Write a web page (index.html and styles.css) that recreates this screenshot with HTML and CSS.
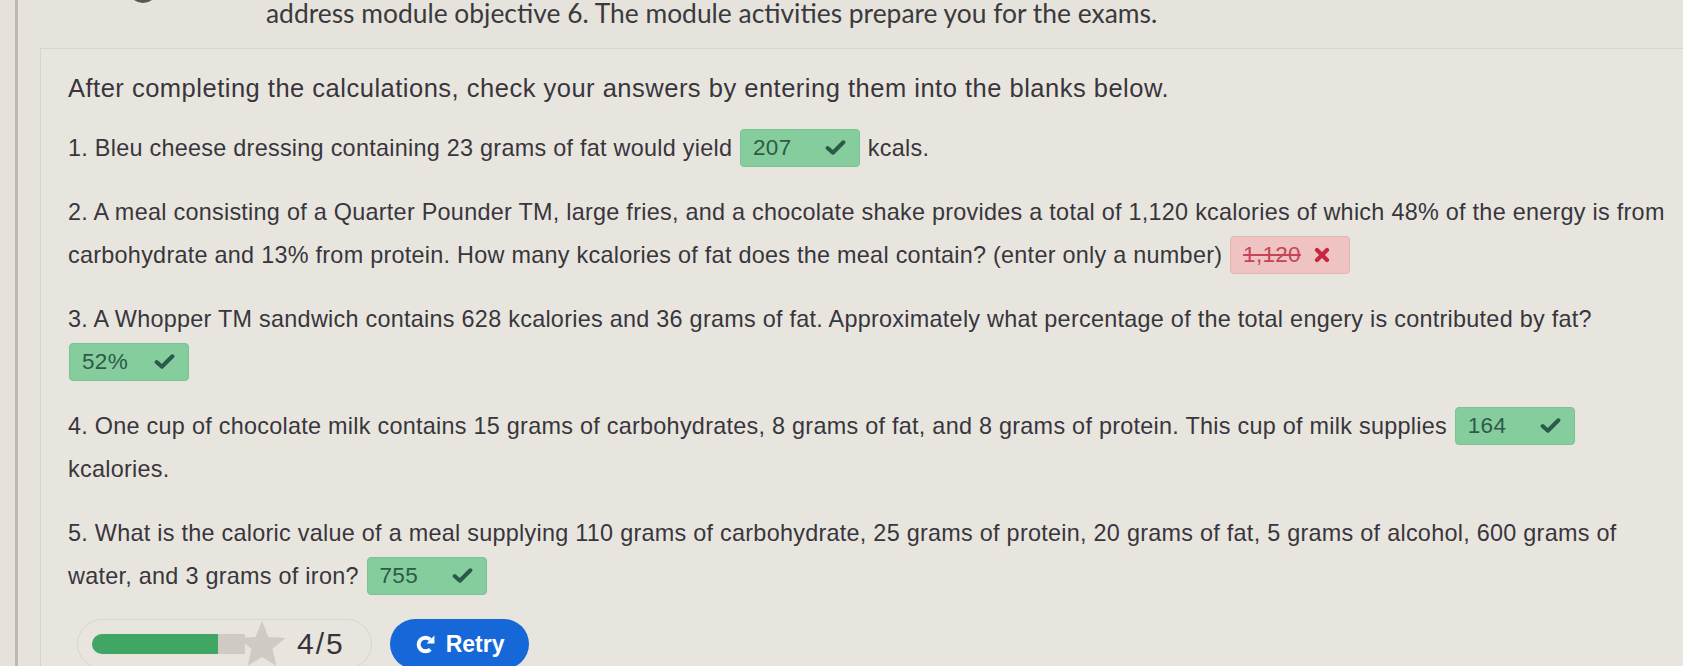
FILE: index.html
```html
<!DOCTYPE html>
<html lang="en">
<head>
<meta charset="utf-8">
<title>Quiz</title>
<link rel="stylesheet" href="styles.css">
</head>
<body>
<div class="frame">
  <div class="header">
    <span class="dot"></span>
    <p class="intro">address module objective 6. The module activities prepare you for the exams.</p>
  </div>
  <div class="card">
    <p class="lead">After completing the calculations, check your answers by entering them into the blanks below.</p>

    <p class="q">1. Bleu cheese dressing containing 23 grams of fat would yield <span class="ans ok"><span class="val">207</span><svg class="chk" viewBox="0 0 20 16"><path d="M2.5 8.5 L7.5 13 L17.5 3"/></svg></span> kcals.</p>

    <p class="q">2. A meal consisting of a Quarter Pounder TM, large fries, and a chocolate shake provides a total of 1,120 kcalories of which 48% of the energy is from carbohydrate and 13% from protein. How many kcalories of fat does the meal contain? (enter only a number) <span class="ans bad"><span class="val">1,120</span><svg class="xic" viewBox="0 0 16 16"><path d="M3 3 L13 13 M13 3 L3 13"/></svg></span></p>

    <p class="q">3. A Whopper TM sandwich contains 628 kcalories and 36 grams of fat. Approximately what percentage of the total engery is contributed by fat? <span class="ans ok"><span class="val">52%</span><svg class="chk" viewBox="0 0 20 16"><path d="M2.5 8.5 L7.5 13 L17.5 3"/></svg></span></p>

    <p class="q">4. One cup of chocolate milk contains 15 grams of carbohydrates, 8 grams of fat, and 8 grams of protein. This cup of milk supplies <span class="ans ok"><span class="val">164</span><svg class="chk" viewBox="0 0 20 16"><path d="M2.5 8.5 L7.5 13 L17.5 3"/></svg></span> kcalories.</p>

    <p class="q">5. What is the caloric value of a meal supplying 110 grams of carbohydrate, 25 grams of protein, 20 grams of fat, 5 grams of alcohol, 600 grams of water, and 3 grams of iron? <span class="ans ok"><span class="val">755</span><svg class="chk" viewBox="0 0 20 16"><path d="M2.5 8.5 L7.5 13 L17.5 3"/></svg></span></p>

    <div class="footer">
      <div class="score">
        <div class="bar"><div class="fill"></div></div>
        <svg class="star" viewBox="0 0 50 48"><polygon points="25,1 31.5,17 48.5,18 35.5,29 39.5,46 25,37 10.5,46 14.5,29 1.5,18 18.5,17"/></svg>
        <span class="frac">4/5</span>
      </div>
      <button class="retry"><svg class="redo" viewBox="0 0 20 20"><path class="arc" d="M14.6 5.4 A6.5 6.5 0 1 0 14.6 14.6"/><polygon points="18.5,1.5 18.5,9 11,9"/></svg><span>Retry</span></button>
    </div>
  </div>
</div>
</body>
</html>
```

FILE: styles.css
```css
html, body {
  margin: 0;
  padding: 0;
  background: #e5e2dc;
  overflow: hidden;
}

.frame {
  margin-left: 15px;
  border-left: 3px solid #bdb9b2;
  height: 666px;
  background: #e6e3dd;
}

.header {
  display: flex;
  align-items: flex-start;
  height: 48px;
}

.dot {
  display: block;
  width: 30px;
  height: 30px;
  border-radius: 50%;
  background: #5a5856;
  margin-top: -27px;
  margin-left: 110px;
  flex: none;
}

.intro {
  margin: -2px 0 0 108px;
  font-family: Lato, "Open Sans", sans-serif;
  font-size: 26.4px;
  line-height: 30px;
  color: #3a3a3c;
  white-space: nowrap;
}

.card {
  margin-left: 22px;
  border-top: 1px solid #d7d4cd;
  border-left: 1px solid #d7d4cd;
  background: #e8e5df;
  padding: 18px 10px 0 27px;
  height: 620px;
  font-family: "Liberation Sans", Arial, Helvetica, sans-serif;
  font-size: 23.4px;
  letter-spacing: 0.27px;
  line-height: 43px;
  color: #38363c;
}

.card p {
  margin: 0 0 21px 0;
}

.card .lead {
  margin-bottom: 17px;
  font-size: 25.5px;
  letter-spacing: 0.5px;
}

.ans {
  display: inline-flex;
  align-items: center;
  justify-content: space-between;
  box-sizing: border-box;
  width: 120px;
  height: 38px;
  padding: 0 13px 0 12px;
  border-radius: 4px;
  vertical-align: middle;
  margin: -4px 1px 0 1px;
  font-size: 22.5px;
  line-height: 38px;
  letter-spacing: 0.3px;
}

.ans.ok {
  background: #85cd9c;
  border: 1px solid #79c291;
  color: #2e5a49;
}

.ans.bad {
  background: #efc3c2;
  border: 1px solid #e7b4b4;
  color: #c44458;
}

.ans.bad .val {
  text-decoration: line-through;
  text-decoration-thickness: 2px;
}

.chk {
  width: 21px;
  height: 17px;
  fill: none;
  stroke: #2c5a4a;
  stroke-width: 3.8;
  stroke-linecap: round;
  stroke-linejoin: round;
}

.xic {
  width: 16px;
  height: 16px;
  margin-right: 6px;
  fill: none;
  stroke: #c8263f;
  stroke-width: 4.2;
  stroke-linecap: round;
}

.footer {
  display: flex;
  align-items: center;
  gap: 18px;
  margin-top: 19px;
}

.score {
  display: flex;
  align-items: center;
  box-sizing: border-box;
  height: 50px;
  margin-left: 9px;
  padding: 0 26px 0 14px;
  border: 1px solid #d8d5ce;
  border-radius: 25px;
}

.bar {
  width: 153px;
  height: 20px;
  background: #cfcbc4;
  border-radius: 10px 0 0 10px;
  overflow: hidden;
}

.fill {
  width: 126px;
  height: 100%;
  background: #3fa763;
}

.star {
  width: 50px;
  height: 48px;
  margin-left: -8px;
  fill: #cfcbc4;
}

.frac {
  margin-left: 10px;
  font-size: 30px;
  letter-spacing: 2px;
  line-height: 1;
  color: #35343a;
}

.retry {
  display: flex;
  align-items: center;
  gap: 10px;
  box-sizing: border-box;
  width: 139px;
  height: 50px;
  padding: 0 0 0 25px;
  border: none;
  border-radius: 25px;
  background: #1667d7;
  color: #ffffff;
  font-family: "Liberation Sans", Arial, sans-serif;
  font-size: 23px;
  font-weight: 700;
  letter-spacing: 0;
}

.redo {
  width: 21px;
  height: 21px;
  flex: none;
}

.redo .arc {
  fill: none;
  stroke: #ffffff;
  stroke-width: 3.8;
}

.redo polygon {
  fill: #ffffff;
}
```
